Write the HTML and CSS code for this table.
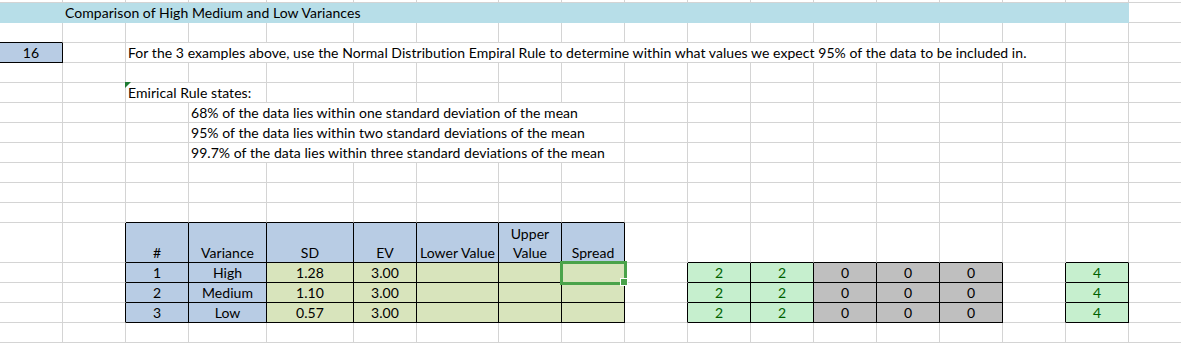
FILE: index.html
```html
<!DOCTYPE html>
<html>
<head>
<meta charset="utf-8">
<link rel="stylesheet" href="styles.css">
</head>
<body>
<div class="sheet">
  <div class="row r0">
    <div class="c"></div><div class="c"></div><div class="c"></div><div class="c"></div><div class="c"></div><div class="c"></div><div class="c"></div><div class="c"></div><div class="c"></div><div class="c"></div><div class="c"></div><div class="c"></div><div class="c"></div><div class="c"></div><div class="c"></div><div class="c"></div><div class="c"></div><div class="c"></div>
  </div>
  <div class="row">
    <div class="c band"></div><div class="c band s16">Comparison of High Medium and Low Variances</div><div class="c"></div>
  </div>
  <div class="row">
    <div class="c bkb"></div><div class="c"></div><div class="c"></div><div class="c"></div><div class="c"></div><div class="c"></div><div class="c"></div><div class="c"></div><div class="c"></div><div class="c"></div><div class="c"></div><div class="c"></div><div class="c"></div><div class="c"></div><div class="c"></div><div class="c"></div><div class="c"></div><div class="c"></div>
  </div>
  <div class="row">
    <div class="c tb bl ctr">16</div><div class="c"></div><div class="c s14">For the 3 examples above, use the Normal Distribution Empiral Rule to determine within what values we expect 95% of the data to be included in.</div><div class="c"></div><div class="c"></div>
  </div>
  <div class="row">
    <div class="c"></div><div class="c"></div><div class="c"></div><div class="c"></div><div class="c"></div><div class="c"></div><div class="c"></div><div class="c"></div><div class="c"></div><div class="c"></div><div class="c"></div><div class="c"></div><div class="c"></div><div class="c"></div><div class="c"></div><div class="c"></div><div class="c"></div><div class="c"></div>
  </div>
  <div class="row">
    <div class="c"></div><div class="c"></div><div class="c s2 warn">Emirical Rule states:</div><div class="c"></div><div class="c"></div><div class="c"></div><div class="c"></div><div class="c"></div><div class="c"></div><div class="c"></div><div class="c"></div><div class="c"></div><div class="c"></div><div class="c"></div><div class="c"></div><div class="c"></div><div class="c"></div>
  </div>
  <div class="row">
    <div class="c"></div><div class="c"></div><div class="c"></div><div class="c s6">68% of the data lies within one standard deviation of the mean</div><div class="c"></div><div class="c"></div><div class="c"></div><div class="c"></div><div class="c"></div><div class="c"></div><div class="c"></div><div class="c"></div><div class="c"></div>
  </div>
  <div class="row">
    <div class="c"></div><div class="c"></div><div class="c"></div><div class="c s6">95% of the data lies within two standard deviations of the mean</div><div class="c"></div><div class="c"></div><div class="c"></div><div class="c"></div><div class="c"></div><div class="c"></div><div class="c"></div><div class="c"></div><div class="c"></div>
  </div>
  <div class="row">
    <div class="c"></div><div class="c"></div><div class="c"></div><div class="c s6">99.7% of the data lies within three standard deviations of the mean</div><div class="c"></div><div class="c"></div><div class="c"></div><div class="c"></div><div class="c"></div><div class="c"></div><div class="c"></div><div class="c"></div><div class="c"></div>
  </div>
  <div class="row">
    <div class="c"></div><div class="c"></div><div class="c"></div><div class="c"></div><div class="c"></div><div class="c"></div><div class="c"></div><div class="c"></div><div class="c"></div><div class="c"></div><div class="c"></div><div class="c"></div><div class="c"></div><div class="c"></div><div class="c"></div><div class="c"></div><div class="c"></div><div class="c"></div>
  </div>
  <div class="row">
    <div class="c"></div><div class="c"></div><div class="c"></div><div class="c"></div><div class="c"></div><div class="c"></div><div class="c"></div><div class="c"></div><div class="c"></div><div class="c"></div><div class="c"></div><div class="c"></div><div class="c"></div><div class="c"></div><div class="c"></div><div class="c"></div><div class="c"></div><div class="c"></div>
  </div>
  <div class="row">
    <div class="c"></div><div class="c"></div><div class="c bkb"></div><div class="c bkb"></div><div class="c bkb"></div><div class="c bkb"></div><div class="c bkb"></div><div class="c bkb"></div><div class="c bkb"></div><div class="c"></div><div class="c"></div><div class="c"></div><div class="c"></div><div class="c"></div><div class="c"></div><div class="c"></div><div class="c"></div><div class="c"></div>
  </div>
  <div class="row tall">
    <div class="c"></div><div class="c bkr"></div>
    <div class="c tb bl th">#</div><div class="c tb bl th">Variance</div><div class="c tb bl th">SD</div><div class="c tb bl th">EV</div><div class="c tb bl th">Lower Value</div><div class="c tb bl th">Upper<br>Value</div><div class="c tb bl th">Spread</div>
    <div class="c"></div><div class="c bkb"></div><div class="c bkb"></div><div class="c bkb"></div><div class="c bkb"></div><div class="c bkb"></div><div class="c"></div><div class="c bkb"></div><div class="c"></div>
  </div>
  <div class="row">
    <div class="c"></div><div class="c bkr"></div>
    <div class="c tb bl ctr">1</div><div class="c tb bl ctr">High</div><div class="c tb ol ctr">1.28</div><div class="c tb ol ctr">3.00</div><div class="c tb ol"></div><div class="c tb ol"></div><div class="c tb ol sel"></div>
    <div class="c bkr"></div><div class="c tb gd ctr">2</div><div class="c tb gd ctr">2</div><div class="c tb gy ctr">0</div><div class="c tb gy ctr">0</div><div class="c tb gy ctr">0</div><div class="c bkr"></div><div class="c tb gd ctr">4</div><div class="c"></div>
  </div>
  <div class="row">
    <div class="c"></div><div class="c bkr"></div>
    <div class="c tb bl ctr">2</div><div class="c tb bl ctr">Medium</div><div class="c tb ol ctr">1.10</div><div class="c tb ol ctr">3.00</div><div class="c tb ol"></div><div class="c tb ol"></div><div class="c tb ol"></div>
    <div class="c bkr"></div><div class="c tb gd ctr">2</div><div class="c tb gd ctr">2</div><div class="c tb gy ctr">0</div><div class="c tb gy ctr">0</div><div class="c tb gy ctr">0</div><div class="c bkr"></div><div class="c tb gd ctr">4</div><div class="c"></div>
  </div>
  <div class="row">
    <div class="c"></div><div class="c bkr"></div>
    <div class="c tb bl ctr">3</div><div class="c tb bl ctr">Low</div><div class="c tb ol ctr">0.57</div><div class="c tb ol ctr">3.00</div><div class="c tb ol"></div><div class="c tb ol"></div><div class="c tb ol"></div>
    <div class="c bkr"></div><div class="c tb gd ctr">2</div><div class="c tb gd ctr">2</div><div class="c tb gy ctr">0</div><div class="c tb gy ctr">0</div><div class="c tb gy ctr">0</div><div class="c bkr"></div><div class="c tb gd ctr">4</div><div class="c"></div>
  </div>
  <div class="row">
    <div class="c"></div><div class="c"></div><div class="c"></div><div class="c"></div><div class="c"></div><div class="c"></div><div class="c"></div><div class="c"></div><div class="c"></div><div class="c"></div><div class="c"></div><div class="c"></div><div class="c"></div><div class="c"></div><div class="c"></div><div class="c"></div><div class="c"></div><div class="c"></div>
  </div>
</div>
</body>
</html>
```
FILE: styles.css
```css
html, body {
  margin: 0;
  padding: 0;
  background: #fff;
}
body {
  font-family: Lato, "Liberation Sans", sans-serif;
  font-size: 14px;
  letter-spacing: 0.05px;
  color: #000;
  overflow: hidden;
}
.sheet {
  width: 1181px;
  height: 343px;
  overflow: hidden;
}
.row {
  display: grid;
  grid-template-columns: 63px 63px 63px 78px 87px 63px 82px 63px 63px 63px 63px 63px 63px 63px 63px 63px 63px 1fr;
  height: 20px;
}
.row.r0 { height: 3px; }
.row.tall { height: 40px; }
.c {
  box-sizing: border-box;
  min-width: 0;
  border-right: 1px solid #d4d4d4;
  border-bottom: 1px solid #d4d4d4;
  padding: 0 2px;
  line-height: 19px;
  white-space: nowrap;
}
.row > .c:last-child { border-right: 0; }
.s2 { grid-column: span 2; }
.s6 { grid-column: span 6; }
.s14 { grid-column: span 14; }
.s16 { grid-column: span 16; }

.band {
  background: #b7dee8;
  border-color: #b7dee8;
}
.bkb { border-bottom-color: #000; }
.bkr { border-right-color: #000; }
.tb { border-right-color: #000; border-bottom-color: #000; }
.bl { background: #b8cce4; }
.ol { background: #d8e4bc; }
.gd { background: #c6efce; color: #006100; }
.gy { background: #bfbfbf; }
.ctr { text-align: center; }
.th {
  display: flex;
  flex-direction: column;
  justify-content: flex-end;
  text-align: center;
}

.warn { position: relative; }
.warn::before {
  content: "";
  position: absolute;
  left: -1px;
  top: -1px;
  border-top: 6px solid #1e7b34;
  border-right: 6px solid transparent;
}

.sel { position: relative; }
.sel::after {
  content: "";
  position: absolute;
  left: -2px;
  top: -2px;
  right: -3px;
  bottom: -3px;
  border: 3px solid #4aa34a;
  z-index: 2;
}
.sel::before {
  content: "";
  position: absolute;
  right: -4px;
  bottom: -4px;
  width: 6px;
  height: 6px;
  background: #4aa34a;
  border: 1px solid #fff;
  z-index: 3;
}
```
